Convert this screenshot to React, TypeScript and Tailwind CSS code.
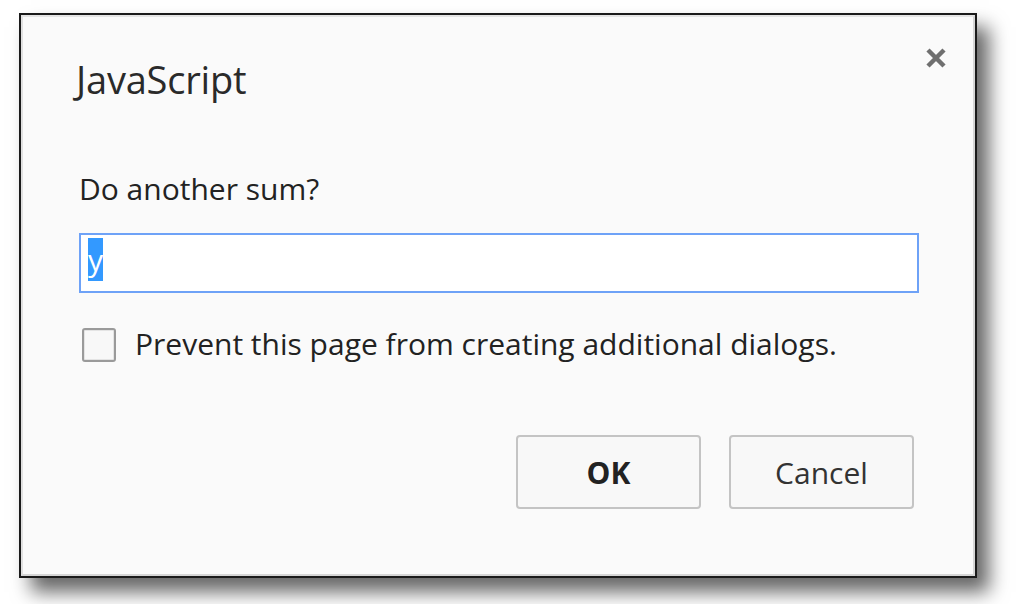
import React from "react";

export default function App() {
  const font = { fontFamily: '"Open Sans", "Noto Sans", Arial, sans-serif' };
  return (
    <div className="w-[1016px] h-[604px] bg-white pl-[19px] pt-[13px] overflow-hidden" style={font}>
      <div className="relative w-[958px] h-[565px] border-2 border-[#1a1a1a] bg-[#fafafa] shadow-[12px_14px_18px_rgba(0,0,0,0.6)]">
        <div className="relative h-full w-full border-2 border-[#d6d6d6] border-t-[#e4e4e4] border-l-[#e0e0e0] flex flex-col pl-[56px] pr-[54px] pt-[42px]">
          <button className="absolute top-[30px] right-[26px] w-[22px] h-[22px] flex items-center justify-center">
            <svg width="22" height="22" viewBox="0 0 22 22">
              <path d="M3 3 L19 19 M19 3 L3 19" stroke="#6f6f6f" strokeWidth="4.5" strokeLinecap="butt" />
            </svg>
          </button>
          <div className="ml-[-3px] text-[38px] leading-[40px] text-[#2a2a2a] tracking-[-0.2px]">JavaScript</div>
          <div className="mt-[74px] ml-[0px] text-[30px] leading-[32px] text-[#222]">Do another sum?</div>
          <div className="mt-[28px] w-[840px] h-[60px] border-2 border-[#6ea2f7] bg-white flex items-start pl-[7px] pt-[3px]">
            <span className="bg-[#3399ff] text-white text-[30px] leading-[43px]">y</span>
          </div>
          <div className="mt-[35px] flex items-center ml-[3px]">
            <div className="w-[34px] h-[34px] border-2 border-[#9a9a9a] rounded-[3px] bg-[#f8f8f8] shadow-[inset_0_0_0_1px_#e4e4e4]" />
            <span className="ml-[19px] mt-[-3px] text-[30px] leading-[32px] text-[#222]">Prevent this page from creating additional dialogs.</span>
          </div>
          <div className="mt-[73px] flex justify-end gap-[28px] mr-[5px]">
            <button className="w-[185px] h-[74px] border-2 border-[#c4c4c4] rounded-[4px] bg-[#f8f8f8] text-[30px] font-bold text-[#222]">OK</button>
            <button className="w-[185px] h-[74px] border-2 border-[#c4c4c4] rounded-[4px] bg-[#f8f8f8] text-[30px] text-[#333]">Cancel</button>
          </div>
        </div>
      </div>
    </div>
  );
}
